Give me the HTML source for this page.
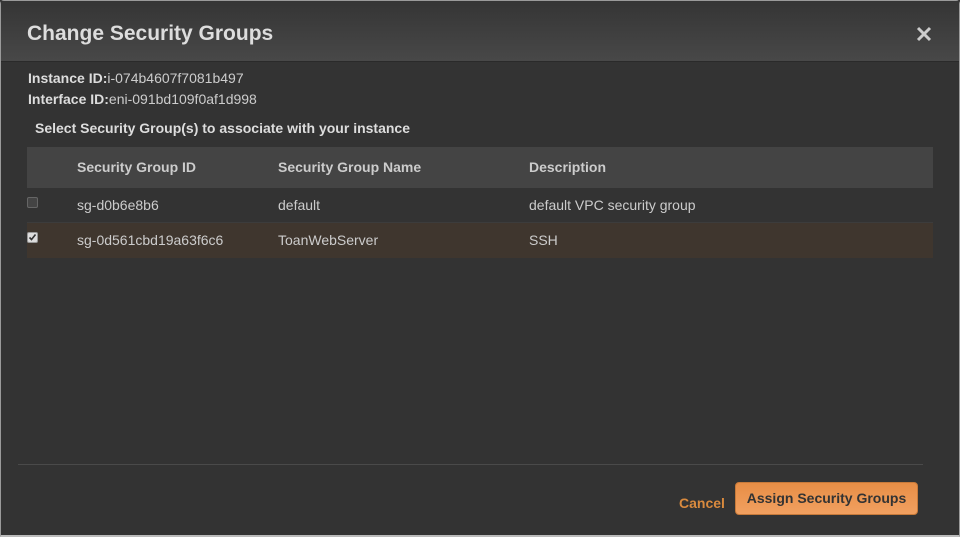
<!DOCTYPE html>
<html><head><meta charset="utf-8"><style>
*{margin:0;padding:0;box-sizing:border-box}
body{width:960px;height:537px;background:#333;font-family:"Liberation Sans",Arial,sans-serif;overflow:hidden;position:relative}
.frame{position:absolute;inset:0;border:1px solid #9a9a9a;border-radius:4px 4px 0 0;border-bottom:2px solid #bbb}
.hdr{position:absolute;left:1px;top:1px;width:958px;height:61px;background:linear-gradient(#353535,#484848);border-bottom:1px solid #2a2a2a}
.hdr h1{position:absolute;left:26px;top:21px;font-size:21px;font-weight:bold;color:#ddd;line-height:24px}
.x{position:absolute;left:914px;top:24px}
.line1{position:absolute;left:28px;top:68px;font-size:14px;color:#ccc;line-height:21px}
.line1 b{color:#ddd}
.sel{position:absolute;left:35px;top:120px;font-size:14px;font-weight:bold;color:#ddd}
.th{position:absolute;left:27px;top:147px;width:906px;height:41px;background:#444}
.th span,.row span{position:absolute;font-size:14px}
.th span{top:12px;font-weight:bold;color:#ccc}
.row{position:absolute;left:27px;width:906px;height:35px}
.row span{top:9px;color:#ccc}
.r1{top:188px;border-bottom:1px solid #3c3c3c}
.r2{top:223px;background:#3f362e}
.cb{position:absolute;left:0;top:9px;width:11px;height:11px;border:1px solid #666;background:#444;border-radius:2px}
.cb2{background:#ddd;border-color:#999}
.sep{position:absolute;left:18px;top:464px;width:905px;height:1px;background:#4a4a4a}
.cancel{position:absolute;left:679px;top:495px;font-size:14px;font-weight:bold;color:#d98a3e}
.btn{position:absolute;left:735px;top:482px;width:183px;height:33px;border-radius:4px;background:linear-gradient(#e88e46,#f1a060);border:1px solid #c77a3a;font-size:14px;font-weight:bold;color:#333;text-align:center;line-height:31px}
</style></head><body>
<div class="frame"></div>
<div class="hdr"><h1>Change Security Groups</h1>
<svg class="x" width="18" height="18" viewBox="0 0 18 18"><path d="M3 3L15 15M15 3L3 15" stroke="#ccc" stroke-width="3"/></svg></div>
<div class="line1"><b>Instance ID:</b>i-074b4607f7081b497<br><b>Interface ID:</b>eni-091bd109f0af1d998</div>
<div class="sel">Select Security Group(s) to associate with your instance</div>
<div class="th"><span style="left:50px">Security Group ID</span><span style="left:251px">Security Group Name</span><span style="left:502px">Description</span></div>
<div class="row r1"><div class="cb"></div><span style="left:50px">sg-d0b6e8b6</span><span style="left:251px">default</span><span style="left:502px">default VPC security group</span></div>
<div class="row r2"><div class="cb cb2"><svg width="9" height="9" viewBox="0 0 9 9" style="position:absolute;left:0;top:0"><path d="M1.5 4.5L3.5 6.5L7.5 1.5" stroke="#333" stroke-width="1.6" fill="none"/></svg></div><span style="left:50px">sg-0d561cbd19a63f6c6</span><span style="left:251px">ToanWebServer</span><span style="left:502px">SSH</span></div>
<div class="sep"></div>
<div class="cancel">Cancel</div>
<div class="btn">Assign Security Groups</div>
</body></html>
